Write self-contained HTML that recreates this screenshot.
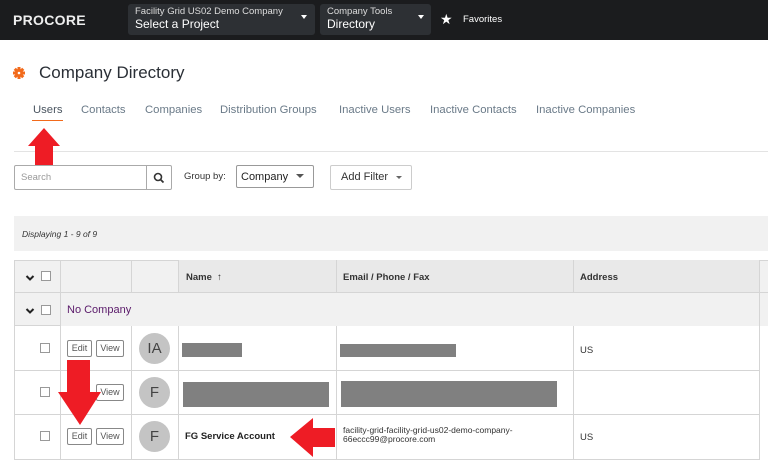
<!DOCTYPE html>
<html><head><meta charset="utf-8"><style>
*{box-sizing:border-box;margin:0;padding:0}
body{width:768px;height:465px;overflow:hidden;background:#fff;font-family:"Liberation Sans",sans-serif;position:relative;color:#222}
.a{position:absolute}
.top{left:0;top:0;width:768px;height:40px;background:#1b1c1e}
.dd{background:#2d3034;border-radius:3px;color:#fff}
.tab{top:104px;font-size:11.3px;color:#6a7a88}
.cell{position:absolute;border-right:1px solid #d5d5d5;border-bottom:1px solid #d5d5d5}
.cb{position:absolute;width:10px;height:10px;border:1px solid #999;background:#fff}
.btn{position:absolute;height:17px;border:1px solid #888;border-radius:2px;font-size:9px;color:#555;text-align:center;line-height:15px;background:#fff}
.av{position:absolute;width:31px;height:31px;border-radius:50%;background:#c4c4c4;color:#444;font-size:15px;text-align:center;line-height:31px}
.gray{position:absolute;background:#808080}
</style></head><body>
<div class="a top"></div>
<div class="a" style="left:13px;top:12px;color:#eee;font-weight:bold;font-size:14px;letter-spacing:0.3px">PROCORE</div>
<div class="a dd" style="left:128px;top:4px;width:187px;height:31px"></div>
<div class="a" style="left:135px;top:6px;color:#ddd;font-size:9.5px">Facility Grid US02 Demo Company</div>
<div class="a" style="left:135px;top:17px;color:#fff;font-size:12px">Select a Project</div>
<div class="a" style="left:301px;top:15px;width:0;height:0;border-left:3.5px solid transparent;border-right:3.5px solid transparent;border-top:4px solid #fff"></div>
<div class="a dd" style="left:320px;top:4px;width:111px;height:31px"></div>
<div class="a" style="left:327px;top:6px;color:#ddd;font-size:9.5px">Company Tools</div>
<div class="a" style="left:327px;top:17px;color:#fff;font-size:12px">Directory</div>
<div class="a" style="left:418px;top:15px;width:0;height:0;border-left:3.5px solid transparent;border-right:3.5px solid transparent;border-top:4px solid #fff"></div>
<div class="a" style="left:440px;top:11px;color:#fff;font-size:14px">★</div>
<div class="a" style="left:463px;top:14px;color:#fff;font-size:9.5px">Favorites</div>

<svg class="a" style="left:13px;top:67px" width="12" height="12" viewBox="0 0 12 12"><g fill="#f26a1b"><circle cx="6" cy="6" r="4"/><rect x="4.5" y="0" width="3" height="12"/><rect x="0" y="4.5" width="12" height="3"/><rect x="4.5" y="0" width="3" height="12" transform="rotate(45 6 6)"/><rect x="4.5" y="0" width="3" height="12" transform="rotate(-45 6 6)"/></g><circle cx="6" cy="6" r="1.3" fill="#fff"/></svg>
<div class="a" style="left:39px;top:63px;font-size:17px;color:#2a2f36">Company Directory</div>
<div class="a tab" style="left:33px;color:#4a5560">Users</div>
<div class="a" style="left:32px;top:120px;width:31px;height:1px;background:#f26a1b"></div>
<div class="a tab" style="left:81px">Contacts</div>
<div class="a tab" style="left:145px">Companies</div>
<div class="a tab" style="left:220px">Distribution Groups</div>
<div class="a tab" style="left:339px">Inactive Users</div>
<div class="a tab" style="left:430px">Inactive Contacts</div>
<div class="a tab" style="left:536px">Inactive Companies</div>
<div class="a" style="left:14px;top:151px;width:754px;height:1px;background:#e3e3e3"></div>

<div class="a" style="left:14px;top:165px;width:158px;height:25px;border:1px solid #aaa;border-radius:2px"></div>
<div class="a" style="left:146px;top:165px;width:1px;height:25px;background:#aaa"></div>
<div class="a" style="left:21px;top:172px;font-size:9.5px;color:#999">Search</div>
<svg class="a" style="left:153px;top:172px" width="12" height="12" viewBox="0 0 12 12"><circle cx="5" cy="5" r="3.5" fill="none" stroke="#333" stroke-width="1.6"/><line x1="7.5" y1="7.5" x2="10.5" y2="10.5" stroke="#333" stroke-width="1.8"/></svg>
<div class="a" style="left:184px;top:171px;font-size:9.5px;color:#333">Group by:</div>
<div class="a" style="left:236px;top:165px;width:78px;height:23px;border:1px solid #999;border-radius:2px"></div>
<div class="a" style="left:241px;top:171px;font-size:11px;color:#222">Company</div>
<div class="a" style="left:296px;top:174px;border-left:4px solid transparent;border-right:4px solid transparent;border-top:4px solid #555"></div>
<div class="a" style="left:330px;top:165px;width:82px;height:25px;border:1px solid #ccc;border-radius:2px"></div>
<div class="a" style="left:341px;top:171px;font-size:11px;color:#333">Add Filter</div>
<div class="a" style="left:396px;top:176px;border-left:3px solid transparent;border-right:3px solid transparent;border-top:3px solid #666"></div>

<div class="a" style="left:14px;top:216px;width:754px;height:35px;background:#f1f1f1"></div>
<div class="a" style="left:22px;top:229px;font-size:8.5px;font-style:italic;color:#333">Displaying 1 - 9 of 9</div>

<div class="a" style="left:14px;top:260px;width:754px;height:66px;background:#f1f1f1;border-top:1px solid #d5d5d5;border-left:1px solid #d5d5d5"></div>
<div class="a" style="left:178px;top:260px;width:581px;height:33px;background:#e9e9e9"></div>
<div class="cell" style="left:14px;top:260px;width:47px;height:33px"></div>
<div class="cell" style="left:60px;top:260px;width:72px;height:33px"></div>
<div class="cell" style="left:131px;top:260px;width:48px;height:33px"></div>
<div class="cell" style="left:178px;top:260px;width:159px;height:33px"></div>
<div class="cell" style="left:336px;top:260px;width:238px;height:33px"></div>
<div class="cell" style="left:573px;top:260px;width:187px;height:33px"></div>
<div class="a" style="left:14px;top:292px;width:754px;height:1px;background:#d5d5d5"></div>
<svg class="a" style="left:25px;top:274px" width="10" height="8"><polyline points="1.5,2 5,5.5 8.5,2" fill="none" stroke="#222" stroke-width="2"/></svg>
<div class="cb" style="left:41px;top:271px"></div>
<div class="a" style="left:186px;top:272px;font-size:9.5px;font-weight:bold;color:#333">Name &nbsp;↑</div>
<div class="a" style="left:343px;top:272px;font-size:9.5px;font-weight:bold;color:#333">Email / Phone / Fax</div>
<div class="a" style="left:580px;top:272px;font-size:9.5px;font-weight:bold;color:#333">Address</div>
<div class="cell" style="left:14px;top:293px;width:47px;height:33px"></div>
<div class="a" style="left:759px;top:293px;width:1px;height:33px;background:#d5d5d5"></div>
<svg class="a" style="left:25px;top:307px" width="10" height="8"><polyline points="1.5,2 5,5.5 8.5,2" fill="none" stroke="#222" stroke-width="2"/></svg>
<div class="cb" style="left:41px;top:305px"></div>
<div class="a" style="left:67px;top:304px;font-size:11px;color:#5a1a6a">No Company</div>

<div class="a" style="left:14px;top:326px;width:746px;height:134px;border-left:1px solid #d5d5d5"></div>
<div class="cell" style="left:14px;top:326px;width:47px;height:45px"></div>
<div class="cell" style="left:60px;top:326px;width:72px;height:45px"></div>
<div class="cell" style="left:131px;top:326px;width:48px;height:45px"></div>
<div class="cell" style="left:178px;top:326px;width:159px;height:45px"></div>
<div class="cell" style="left:336px;top:326px;width:238px;height:45px"></div>
<div class="cell" style="left:573px;top:326px;width:187px;height:45px"></div>
<div class="cell" style="left:14px;top:370px;width:47px;height:45px"></div>
<div class="cell" style="left:60px;top:370px;width:72px;height:45px"></div>
<div class="cell" style="left:131px;top:370px;width:48px;height:45px"></div>
<div class="cell" style="left:178px;top:370px;width:159px;height:45px"></div>
<div class="cell" style="left:336px;top:370px;width:238px;height:45px"></div>
<div class="cell" style="left:573px;top:370px;width:187px;height:45px"></div>
<div class="cell" style="left:14px;top:414px;width:47px;height:46px"></div>
<div class="cell" style="left:60px;top:414px;width:72px;height:46px"></div>
<div class="cell" style="left:131px;top:414px;width:48px;height:46px"></div>
<div class="cell" style="left:178px;top:414px;width:159px;height:46px"></div>
<div class="cell" style="left:336px;top:414px;width:238px;height:46px"></div>
<div class="cell" style="left:573px;top:414px;width:187px;height:46px"></div>

<div class="cb" style="left:40px;top:343px"></div>
<div class="cb" style="left:40px;top:387px"></div>
<div class="cb" style="left:40px;top:431px"></div>
<div class="btn" style="left:67px;top:340px;width:25px">Edit</div>
<div class="btn" style="left:96px;top:340px;width:28px">View</div>
<div class="btn" style="left:96px;top:384px;width:28px">View</div>
<div class="btn" style="left:67px;top:428px;width:25px">Edit</div>
<div class="btn" style="left:96px;top:428px;width:28px">View</div>
<div class="av" style="left:139px;top:333px">IA</div>
<div class="av" style="left:139px;top:377px">F</div>
<div class="av" style="left:139px;top:421px">F</div>
<div class="gray" style="left:182px;top:343px;width:60px;height:14px"></div>
<div class="gray" style="left:340px;top:344px;width:116px;height:13px"></div>
<div class="gray" style="left:183px;top:382px;width:146px;height:25px"></div>
<div class="gray" style="left:341px;top:381px;width:216px;height:26px"></div>
<div class="a" style="left:185px;top:431px;font-size:9.5px;font-weight:bold;color:#222">FG Service Account</div>
<div class="a" style="left:343px;top:426px;font-size:8.5px;color:#333;line-height:9px">facility-grid-facility-grid-us02-demo-company-<br>66eccc99@procore.com</div>
<div class="a" style="left:580px;top:345px;font-size:9.5px;color:#333">US</div>
<div class="a" style="left:580px;top:432px;font-size:9.5px;color:#333">US</div>

<svg class="a" style="left:0;top:0" width="768" height="465">
<polygon fill="#ee1c25" points="44,128 60,146 53,146 53,165 35,165 35,146 28,146"/>
<polygon fill="#ee1c25" points="67,360 90,360 90,392 101,392 80,425 58,392 67,392"/>
<polygon fill="#ee1c25" points="290,437 313,418 313,428 335,428 335,447 313,447 313,457"/>
</svg>
</body></html>
